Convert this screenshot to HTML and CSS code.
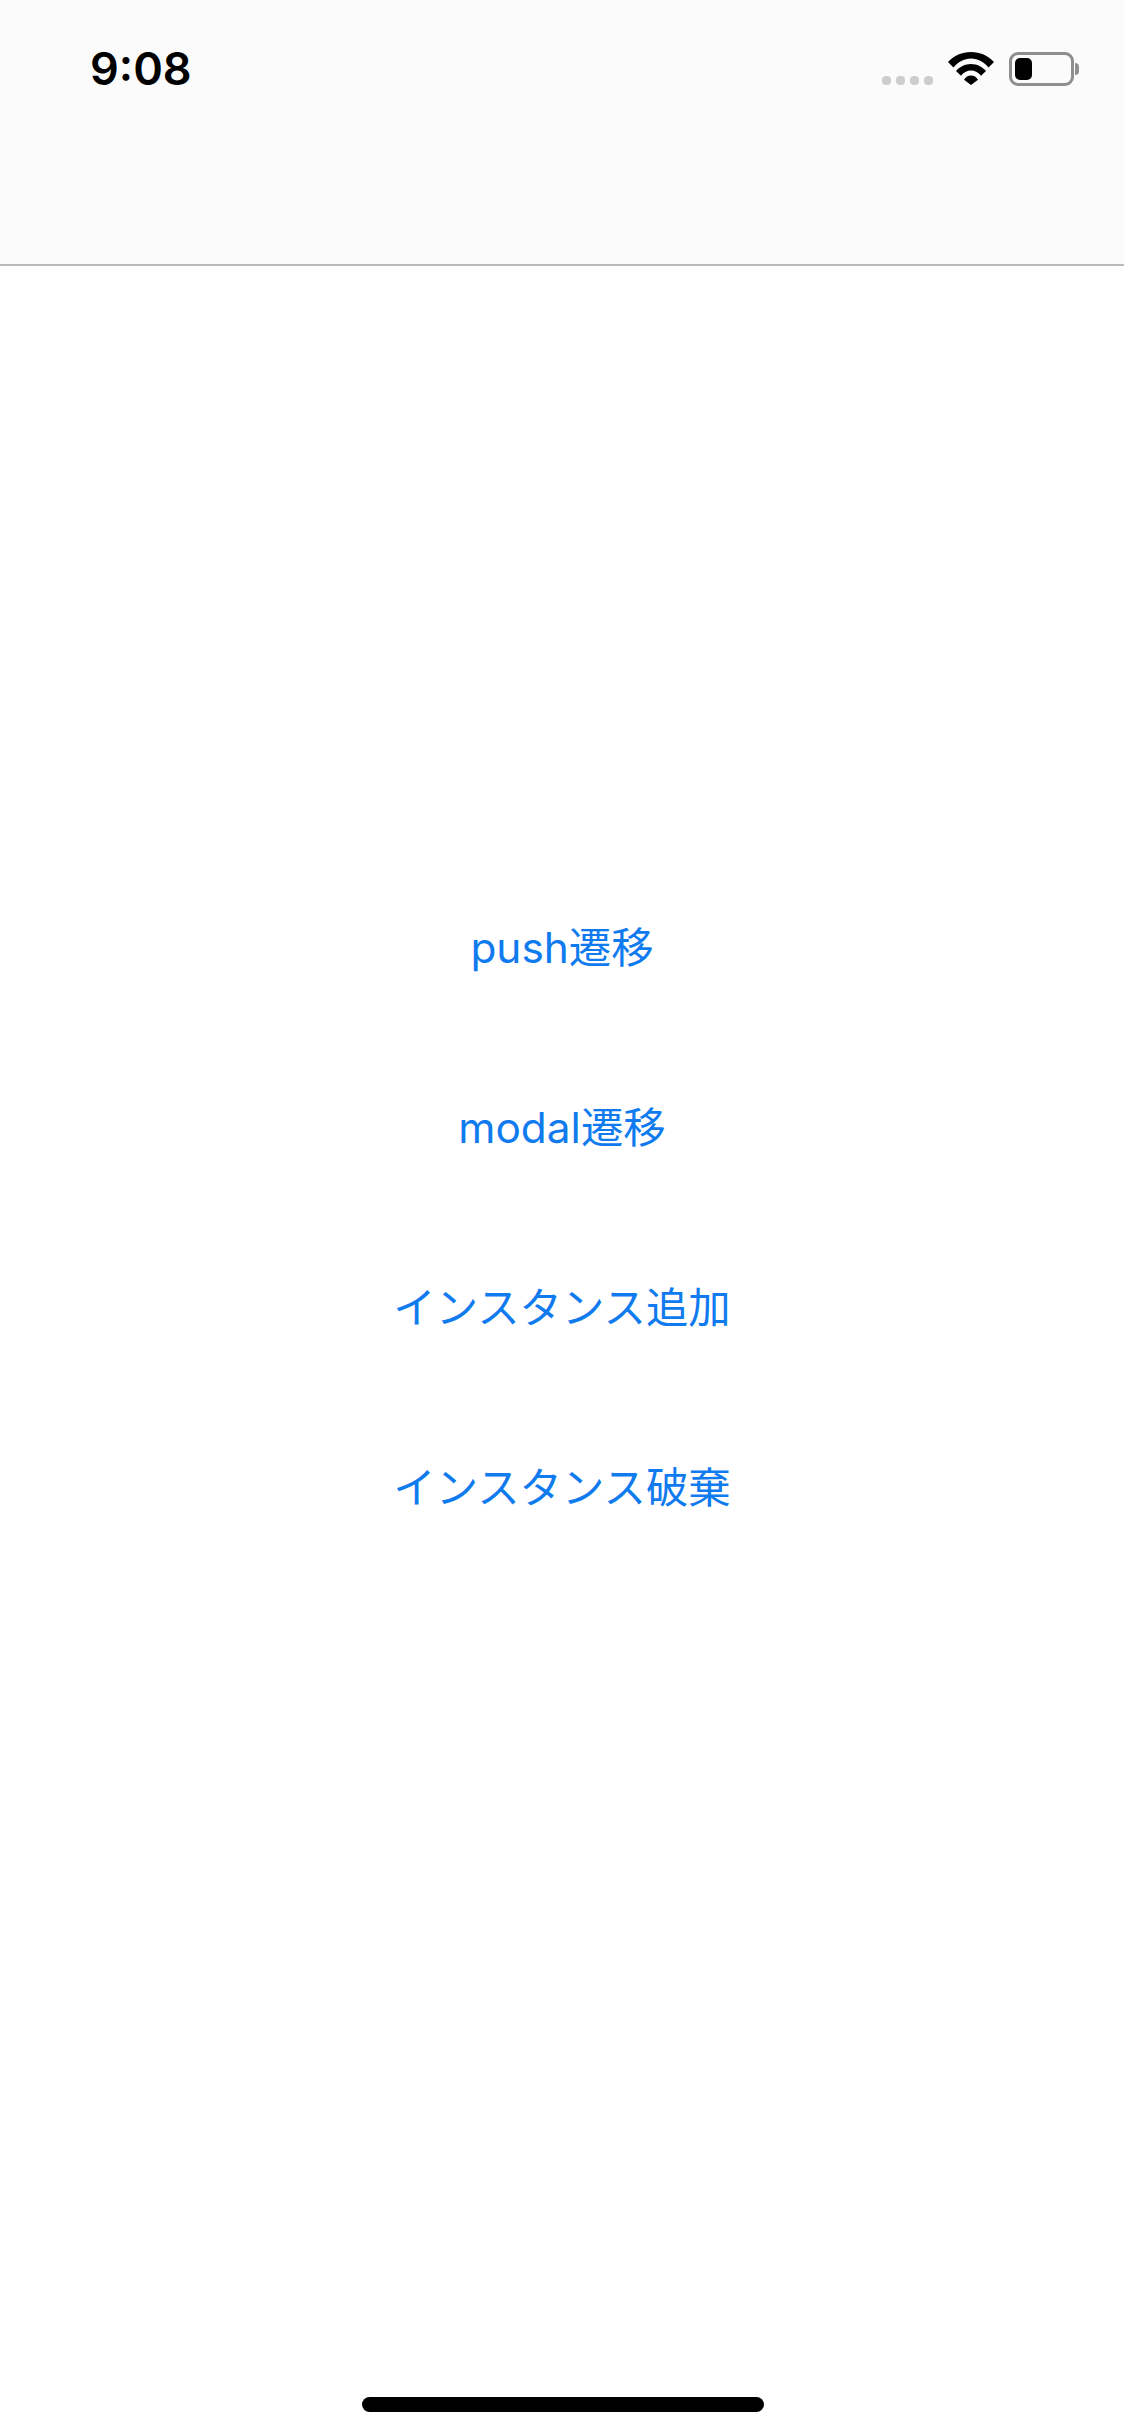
FILE: index.html
```html
<!DOCTYPE html>
<html lang="ja">
<head>
<meta charset="utf-8">
<title>遷移</title>
<link rel="stylesheet" href="styles.css">
</head>
<body>
<div class="page">
  <header class="nav-bar">
    <div class="time">9:08</div>
    <div class="status">
      <div class="signal"><i></i><i></i><i></i><i></i></div>
      <svg class="wifi" viewBox="0 0 46 33" width="46" height="33">
        <path d="M0 10C6 3.600 14 0 23 0C32 0 40 3.600 46 10L40.500 15.500C36 10 30 6.500 23 6.500C16 6.500 10 10 5.500 15.500Z"/>
        <path d="M8 19C11.500 14.800 17 12 23 12C29 12 34.500 14.800 38 19L33 23.800C30.500 20.600 27 18.600 23 18.600C19 18.600 15.500 20.600 13 23.800Z"/>
        <path d="M16 27.800C17.700 25 20 23.500 23 23.500C26 23.500 28.300 25 30 27.800L23 33Z"/>
      </svg>
      <div class="battery">
        <div class="battery-body"><div class="battery-level"></div></div>
        <div class="battery-cap"></div>
      </div>
    </div>
  </header>
  <main class="actions">
    <a class="action">push遷移</a>
    <a class="action">modal遷移</a>
    <a class="action">インスタンス追加</a>
    <a class="action">インスタンス破棄</a>
  </main>
  <div class="home-indicator"></div>
</div>
</body>
</html>
```
FILE: styles.css
```css
* { box-sizing: border-box; }
html, body { margin: 0; padding: 0; background: #fff; }
.page {
  width: 1124px;
  height: 2436px;
  display: flex;
  flex-direction: column;
  overflow: hidden;
  font-family: Inter, "Noto Sans CJK JP", sans-serif;
}
.nav-bar {
  height: 266px;
  flex: none;
  background: #fbfbfb;
  border-bottom: 2px solid #b9b9b9;
  display: flex;
  justify-content: space-between;
  align-items: flex-start;
  padding: 52px 42px 0 90px;
}
.time {
  font-size: 45px;
  line-height: 33px;
  font-weight: 600;
  color: #000;
}
.status {
  display: flex;
  align-items: flex-start;
  margin-right: 3px;
}
.signal {
  display: flex;
  gap: 5px;
  margin-top: 24px;
  margin-right: 15px;
}
.signal i {
  width: 9px;
  height: 9px;
  border-radius: 4px;
  background: #cdcdcd;
}
.wifi { fill: #000; display: block; }
.battery {
  display: flex;
  align-items: center;
  margin-left: 15px;
}
.battery-body {
  width: 65px;
  height: 34px;
  border: 3px solid #8e8e8e;
  border-radius: 9px;
  padding: 3px;
  background: #fbfbfb;
}
.battery-level {
  width: 17px;
  height: 22px;
  background: #000;
  border-radius: 5px;
}
.battery-cap {
  width: 4px;
  height: 12px;
  margin-left: 1px;
  background: #8e8e8e;
  border-radius: 0 4px 4px 0;
}
.actions {
  flex: 1;
  display: flex;
  flex-direction: column;
  align-items: center;
  padding-top: 588px;
}
.action {
  height: 180px;
  display: flex;
  align-items: center;
  font-size: 42.400px;
  color: #0f7bef;
  white-space: nowrap;
}
.home-indicator {
  position: absolute;
  left: 362px;
  top: 2397px;
  width: 402px;
  height: 15px;
  border-radius: 8px;
  background: #000;
}
```
